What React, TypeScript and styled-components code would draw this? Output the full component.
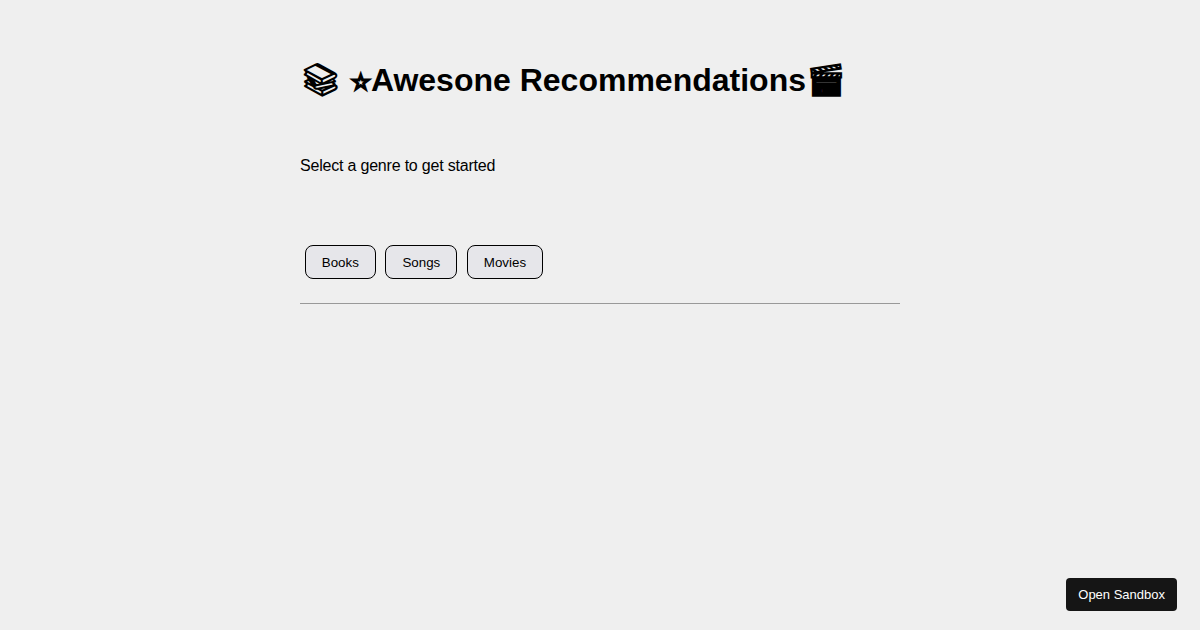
import React from "react";
import styled, { createGlobalStyle } from "styled-components";

const GlobalStyle = createGlobalStyle`
  html, body {
    margin: 0;
    padding: 0;
    background-color: #efefef;
    font-family: "Liberation Sans", Arial, sans-serif;
    color: #000;
  }
`;

const WPage = styled.div`
  width: 600px;
  margin: 0 auto;
  padding-top: 60px;
`;

const WTitle = styled.h1`
  font-size: 32px;
  font-weight: bold;
  margin: 0;
  line-height: 40px;
  font-variant-emoji: text;
`;

const WLead = styled.p`
  font-size: 16px;
  margin: 57px 0 0 0;
  line-height: 18px;
  letter-spacing: -0.2px;
`;

const WGenreBlock = styled.div`
  margin-top: 70px;
  display: flex;
`;

const WGenreButton = styled.button`
  font-family: "Liberation Sans", Arial, sans-serif;
  font-size: 13.333px;
  color: #000;
  background-color: #e6e6ea;
  border: solid 1px #000;
  border-radius: 8px;
  padding: 8px 16px;
  height: 34px;
  margin: 0 4.8px;
  cursor: pointer;
  &:focus {
    outline: none;
  }
`;

const WDivider = styled.hr`
  border: none;
  border-top: solid 1px #999;
  margin: 24px 0 0 0;
`;

const WSandboxButton = styled.button`
  position: fixed;
  right: 23px;
  bottom: 19px;
  background-color: #151515;
  color: #fff;
  border: none;
  border-radius: 4px;
  padding: 0 12px;
  height: 33px;
  font-family: "Liberation Sans", Arial, sans-serif;
  font-size: 13px;
`;

const genres = ["Books", "Songs", "Movies"];

const App = () => {
  return (
    <>
      <GlobalStyle />
      <WPage>
        <WTitle>📚︎ ⭐︎Awesone Recommendations🎬︎</WTitle>
        <WLead>Select a genre to get started</WLead>
        <WGenreBlock>
          {genres.map((genre) => (
            <WGenreButton key={genre}>{genre}</WGenreButton>
          ))}
        </WGenreBlock>
        <WDivider />
      </WPage>
      <WSandboxButton>Open Sandbox</WSandboxButton>
    </>
  );
};

export default App;
